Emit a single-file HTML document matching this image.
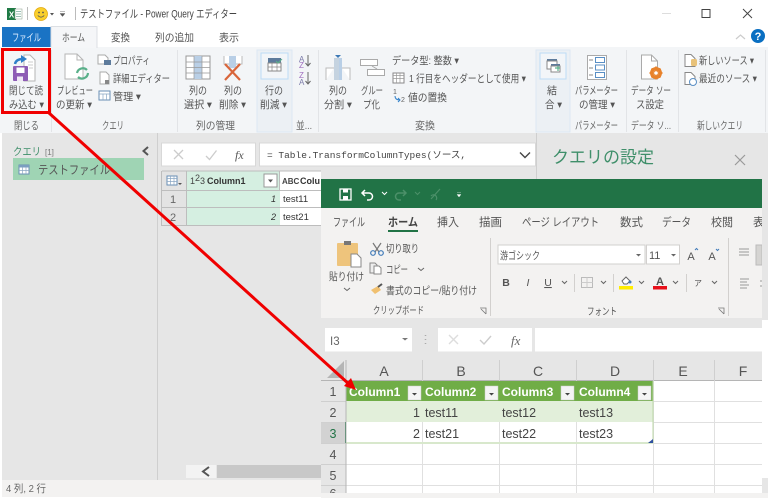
<!DOCTYPE html>
<html lang="ja">
<head>
<meta charset="utf-8">
<title>Power Query</title>
<style>
html,body{margin:0;padding:0;width:768px;height:498px;overflow:hidden;background:#fff}
svg{display:block;position:absolute;left:0;top:0;filter:blur(.3px)}
text{font-family:"Liberation Sans","Noto Sans CJK JP",sans-serif;fill:#555;font-size:10.5px}
.m{text-anchor:middle}
.g{fill:#666}
.x{fill:#555;font-size:11.5px}
.mono{font-family:"Liberation Mono","Noto Sans CJK JP",monospace;fill:#444;font-size:9.5px}
.h{fill:#555;font-size:14px;text-anchor:middle}
.c{fill:#444;font-size:12.5px}
.w{fill:#fff;font-weight:bold;font-size:12px}
</style>
</head>
<body>
<svg width="768" height="498" viewBox="0 0 768 498" xmlns="http://www.w3.org/2000/svg">
<!-- base -->
<rect width="768" height="498" fill="#fff"/>
<rect x="0" y="47" width="768" height="86" fill="#f3f5f7"/>
<rect x="2" y="133" width="766" height="347" fill="#e6e6e6"/>
<rect x="2" y="480" width="320" height="17" fill="#f3f2f1"/>
<rect x="157" y="133" width="1" height="347" fill="#cfcfcf"/>
<rect x="536" y="133" width="1" height="46" fill="#cfcfcf"/>

<!-- title bar -->
<rect x="7" y="8" width="9" height="12" fill="#1f7a45"/>
<rect x="15" y="9" width="7" height="10" fill="#fff" stroke="#9a9" stroke-width=".6"/>
<path d="M16 11.5h5M16 14h5M16 16.500h5" stroke="#7a9" stroke-width=".8"/>
<text x="11.500" y="17.500" class="m" style="fill:#fff;font-size:8px;font-weight:bold">X</text>
<rect x="27" y="7" width="1" height="13" fill="#bbb"/>
<circle cx="41" cy="14" r="6.500" fill="#f9cf2d" stroke="#e3a90f" stroke-width=".8"/>
<circle cx="39" cy="12.500" r=".9" fill="#555"/><circle cx="43" cy="12.500" r=".9" fill="#555"/>
<path d="M37.800 15.500q3.200 3.400 6.400 0" fill="none" stroke="#555" stroke-width=".9"/>
<path d="M50 13h4l-2 2.500z" fill="#555"/>
<path d="M60 11.500h5M60 13.500h5l-2.500 3z" fill="#555" stroke="#555" stroke-width=".4"/>
<rect x="75" y="7" width="1" height="13" fill="#bbb"/>
<text x="80" y="17.500" textLength="157" lengthAdjust="spacingAndGlyphs" style="font-size:11px;fill:#444">テストファイル - Power Query エディター</text>
<rect x="662" y="13" width="9" height="1" fill="#ddd"/>
<rect x="702" y="9.500" width="8" height="8" fill="none" stroke="#444" stroke-width="1"/>
<path d="M743 9l9 9M752 9l-9 9" stroke="#444" stroke-width="1" fill="none"/>

<!-- tabs -->
<rect x="2" y="27" width="49" height="20" fill="#1a73c4"/>
<text x="12" y="41" textLength="29" lengthAdjust="spacingAndGlyphs" style="fill:#dfeeff">ファイル</text>
<path d="M51 47V26.500H97V48" fill="#f5f6f8" stroke="#dcdfe3" stroke-width="1"/>
<text x="62" y="41" textLength="23" lengthAdjust="spacingAndGlyphs">ホーム</text>
<text x="111" y="41" textLength="19" lengthAdjust="spacingAndGlyphs">変換</text>
<text x="155" y="41" textLength="39" lengthAdjust="spacingAndGlyphs">列の追加</text>
<text x="219" y="41" textLength="20" lengthAdjust="spacingAndGlyphs">表示</text>
<path d="M736 39l4.500-4 4.500 4" fill="none" stroke="#ccc" stroke-width="1.200"/>
<circle cx="758" cy="36" r="7" fill="#0a6fc2"/>
<text x="758" y="40" class="m" style="fill:#fff;font-size:11px;font-weight:bold">?</text>

<!-- ribbon highlights & seps -->
<rect x="257" y="50" width="35" height="82" fill="#ecf0f4" stroke="#dce8f3"/>
<rect x="536" y="50" width="34" height="82" fill="#ecf0f4" stroke="#dce8f3"/>
<rect x="261" y="53" width="27" height="26" fill="#f2f5f8" stroke="#bcdcf6"/>
<rect x="540" y="53" width="26" height="26" fill="#f2f5f8" stroke="#bcdcf6"/>
<path d="M51.500 50v82M177.500 50v82M318.500 50v82M626.500 50v82M678.500 50v82M765.500 50v82" stroke="#e2e4e7"/>

<!-- close & load icon -->
<path d="M24 55h6l5 5v21H24z" fill="#fff" stroke="#b5b5b5"/>
<path d="M28 62h5M28 65h5M29 68h4" stroke="#ccc"/>
<rect x="13" y="66" width="15" height="15" fill="#8e5cb5" rx="1"/>
<rect x="16.500" y="67.500" width="8" height="5.500" fill="#fff"/>
<rect x="17" y="76.500" width="6" height="4.500" fill="#efe8f5"/>
<path d="M15 64q1-5 8-5" fill="none" stroke="#2f7fc9" stroke-width="2.400"/>
<path d="M21 55l6 4-6 4z" fill="#2f7fc9"/>
<text x="9" y="94" textLength="34" lengthAdjust="spacingAndGlyphs">閉じて読</text>
<text x="9" y="108" textLength="35" lengthAdjust="spacingAndGlyphs">み込む ▾</text>
<text x="14" y="129" textLength="25" lengthAdjust="spacingAndGlyphs" class="g">閉じる</text>

<!-- preview -->
<path d="M65 54h12l6 6v19H65z" fill="#fff" stroke="#b5b5b5"/>
<path d="M77 54v6h6" fill="none" stroke="#b5b5b5"/>
<path d="M77 73a6 6 0 0 1 10-3M88 73a6 6 0 0 1-10 4" fill="none" stroke="#5ab08a" stroke-width="2.200"/>
<text x="57" y="94" textLength="36" lengthAdjust="spacingAndGlyphs">プレビュー</text>
<text x="56" y="108" textLength="36" lengthAdjust="spacingAndGlyphs">の更新 ▾</text>
<path d="M98 55h7l3 3v6H98z" fill="#fff" stroke="#aaa"/><rect x="104" y="60" width="7" height="5" fill="#5d7b9c"/>
<path d="M100 72h6l3 3v9h-9z" fill="#fff" stroke="#aaa"/><rect x="105" y="80" width="4" height="4" fill="#888"/>
<rect x="99" y="91" width="11" height="9" fill="#fff" stroke="#6a8fb5"/><path d="M99 94h11M103 94v6M106.500 94v6" stroke="#8aa7c4" stroke-width=".7"/>
<text x="113" y="64" textLength="37" lengthAdjust="spacingAndGlyphs">プロパティ</text>
<text x="113" y="82" textLength="57" lengthAdjust="spacingAndGlyphs">詳細エディター</text>
<text x="113" y="100" textLength="28" lengthAdjust="spacingAndGlyphs">管理 ▾</text>
<text x="102" y="129" textLength="22" lengthAdjust="spacingAndGlyphs" class="g">クエリ</text>

<!-- column select/remove -->
<rect x="186" y="56" width="24" height="23" fill="#fff" stroke="#999"/>
<rect x="194" y="56" width="8" height="23" fill="#b9cfe6"/>
<path d="M186 62h24M186 67.500h24M186 73h24M194 56v23M202 56v23" stroke="#999" stroke-width=".7"/>
<text x="189" y="94" textLength="18" lengthAdjust="spacingAndGlyphs">列の</text>
<text x="184" y="108" textLength="28" lengthAdjust="spacingAndGlyphs">選択 ▾</text>
<path d="M224 56v8h18v-8" fill="#fff" stroke="#bbb"/>
<rect x="229" y="56" width="7" height="12" fill="#b9cfe6"/>
<path d="M225 64l15 16M240 64l-15 16" stroke="#d9663b" stroke-width="2.200"/>
<text x="224" y="94" textLength="18" lengthAdjust="spacingAndGlyphs">列の</text>
<text x="219" y="108" textLength="27" lengthAdjust="spacingAndGlyphs">削除 ▾</text>
<text x="196" y="129" textLength="39" lengthAdjust="spacingAndGlyphs" class="g">列の管理</text>

<!-- row reduce -->
<rect x="268" y="58" width="13" height="5" fill="#5d7b9c"/>
<rect x="268" y="63" width="13" height="8" fill="#fff" stroke="#888"/>
<path d="M272 63v8M277 63v8M268 67h13" stroke="#888" stroke-width=".7"/>
<path d="M276 61l2 2 4-4" stroke="#5ab08a" fill="none"/>
<text x="265" y="94" textLength="18" lengthAdjust="spacingAndGlyphs">行の</text>
<text x="260" y="108" textLength="27" lengthAdjust="spacingAndGlyphs">削減 ▾</text>

<!-- sort -->
<text x="299" y="62" style="font-size:8px;fill:#7a7aa8">A</text>
<text x="299" y="68" style="font-size:8px;fill:#a06fc0">Z</text>
<path d="M308 55v11M305.500 63l2.500 3 2.500-3" fill="none" stroke="#666"/>
<text x="299" y="78" style="font-size:8px;fill:#a06fc0">Z</text>
<text x="299" y="85" style="font-size:8px;fill:#7a7aa8">A</text>
<path d="M308 72v12M305.500 81l2.500 3 2.500-3" fill="none" stroke="#666"/>
<text x="296" y="129" textLength="16" lengthAdjust="spacingAndGlyphs" class="g">並...</text>

<!-- split, group -->
<path d="M326 80V68h8M342 68h8v12" fill="#fff" stroke="#bbb"/>
<rect x="334" y="58" width="5" height="22" fill="#c5d3e0"/>
<rect x="339" y="58" width="3" height="22" fill="#b9cfe6"/>
<path d="M335 55h6l-3 3z" fill="#3b78b5"/>
<text x="329" y="94" textLength="18" lengthAdjust="spacingAndGlyphs">列の</text>
<text x="324" y="108" textLength="28" lengthAdjust="spacingAndGlyphs">分割 ▾</text>
<rect x="360.500" y="59.500" width="17" height="6" fill="#fff" stroke="#aaa"/>
<rect x="367.500" y="69.500" width="17" height="6" fill="#fff" stroke="#aaa"/>
<path d="M372 66l5 3" stroke="#aaa"/>
<text x="361" y="94" textLength="22" lengthAdjust="spacingAndGlyphs">グルー</text>
<text x="363" y="108" textLength="17" lengthAdjust="spacingAndGlyphs">プ化</text>
<text x="392" y="64" textLength="67" lengthAdjust="spacingAndGlyphs">データ型: 整数 ▾</text>
<rect x="393" y="73" width="11" height="10" fill="#fff" stroke="#888"/>
<path d="M393 75.500h11M393 78.500h11M396.500 73v10M400 73v10" stroke="#999" stroke-width=".7"/>
<text x="409" y="82" textLength="117" lengthAdjust="spacingAndGlyphs">1 行目をヘッダーとして使用 ▾</text>
<text x="393" y="94" style="font-size:7px;fill:#666">1</text>
<path d="M395 96q0 4 5 4M398 98l2 2-2 2" fill="none" stroke="#2f7fc9"/>
<text x="401" y="102" style="font-size:7px;fill:#666">2</text>
<text x="408" y="101" textLength="39" lengthAdjust="spacingAndGlyphs">値の置換</text>
<text x="415" y="129" textLength="20" lengthAdjust="spacingAndGlyphs" class="g">変換</text>

<!-- merge -->
<rect x="547" y="59" width="10" height="3" fill="#5d7b9c"/>
<rect x="547" y="61" width="10" height="8" fill="#fff" stroke="#888"/>
<rect x="551" y="64" width="9" height="3" fill="#5d7b9c"/>
<rect x="551" y="66" width="9" height="6" fill="#fff" stroke="#888"/>
<path d="M555 68h5M558 66v5" stroke="#5ab08a" stroke-width="1.200"/>
<text x="547" y="94" textLength="10" lengthAdjust="spacingAndGlyphs">結</text>
<text x="545" y="108" textLength="17" lengthAdjust="spacingAndGlyphs">合 ▾</text>

<!-- params -->
<rect x="587.500" y="55.500" width="19" height="24" fill="#fff" stroke="#aaa"/>
<path d="M589 60h4M589 68h4M589 75h4" stroke="#888"/>
<rect x="595.500" y="57.500" width="9" height="5" fill="#fff" stroke="#5a8fc5"/>
<rect x="595.500" y="65" width="9" height="5" fill="#fff" stroke="#5a8fc5"/>
<rect x="595.500" y="72.500" width="9" height="5" fill="#fff" stroke="#5a8fc5"/>
<text x="575" y="94" textLength="43" lengthAdjust="spacingAndGlyphs">パラメーター</text>
<text x="579" y="108" textLength="36" lengthAdjust="spacingAndGlyphs">の管理 ▾</text>
<text x="575" y="129" textLength="43" lengthAdjust="spacingAndGlyphs" class="g">パラメーター</text>

<!-- data source -->
<path d="M641.500 55h10l6 6v18h-16z" fill="#fff" stroke="#aaa"/>
<path d="M651.500 55v6h6" fill="none" stroke="#aaa"/>
<circle cx="656" cy="73" r="4.500" fill="none" stroke="#e8822b" stroke-width="3"/>
<path d="M656 66.500v13M649.500 73h13M651.500 68.500l9 9M660.500 68.500l-9 9" stroke="#e8822b" stroke-width="1.800"/>
<circle cx="656" cy="73" r="1.800" fill="#fff"/>
<text x="631" y="94" textLength="40" lengthAdjust="spacingAndGlyphs">データ ソー</text>
<text x="636" y="108" textLength="28" lengthAdjust="spacingAndGlyphs">ス設定</text>
<text x="631" y="129" textLength="40" lengthAdjust="spacingAndGlyphs" class="g">データ ソ...</text>

<!-- new source -->
<path d="M685 54.500h6l4 4v8h-10z" fill="#fff" stroke="#888"/>
<rect x="691" y="59" width="6" height="7" rx="1.500" fill="#e8c27a"/>
<path d="M685 72.500h6l4 4v8h-10z" fill="#fff" stroke="#888"/>
<circle cx="693" cy="82" r="3.500" fill="#fff" stroke="#5a8fc5"/>
<text x="699" y="64" textLength="55" lengthAdjust="spacingAndGlyphs">新しいソース ▾</text>
<text x="699" y="82" textLength="58" lengthAdjust="spacingAndGlyphs">最近のソース ▾</text>
<text x="697" y="129" textLength="46" lengthAdjust="spacingAndGlyphs" class="g">新しいクエリ</text>

<!-- query pane -->
<text x="13" y="155" style="fill:#3f8f6a" textLength="28" lengthAdjust="spacingAndGlyphs">クエリ</text>
<text x="45" y="155" style="font-size:8px;fill:#777">[1]</text>
<path d="M148 147l-4.500 4 4.500 4" fill="none" stroke="#555" stroke-width="2"/>
<rect x="13" y="158" width="131" height="22" fill="#9fd4b4"/>
<rect x="19" y="165" width="10" height="9" fill="#fff" stroke="#6a8fb5"/>
<rect x="19" y="165" width="10" height="2.500" fill="#7b9ec0"/>
<path d="M22.500 167v7M26 167v7M19 170.500h10" stroke="#8aa7c4" stroke-width=".7"/>
<text x="38" y="174" textLength="72" lengthAdjust="spacingAndGlyphs" style="font-size:12px">テストファイル</text>

<!-- formula bar -->
<rect x="161.500" y="143" width="94" height="23" fill="#fff" stroke="#d8d8d8"/>
<path d="M174 150l9 9M183 150l-9 9" stroke="#ccc" stroke-width="1.300" fill="none"/>
<path d="M206 156l3.500 3.500 7-9" stroke="#ccc" stroke-width="1.300" fill="none"/>
<text x="235" y="159" style="font-family:'Liberation Serif',serif;font-style:italic;font-size:12px;fill:#555">fx</text>
<rect x="259.500" y="143" width="276" height="23" fill="#fff" stroke="#d8d8d8"/>
<text x="267" y="158" class="mono">= Table.TransformColumnTypes(ソース,</text>
<path d="M520 152.500l5 5 5-5" fill="none" stroke="#444" stroke-width="1.400"/>
<text x="552" y="163" textLength="102" lengthAdjust="spacingAndGlyphs" style="fill:#3f8f6a;font-size:17px">クエリの設定</text>
<path d="M735 155l10 10M745 155l-10 10" stroke="#999" stroke-width="1.200"/>

<!-- PQ table -->
<rect x="162" y="171" width="159" height="55" fill="#fff"/>
<rect x="162" y="171" width="25" height="55" fill="#e3e3e3"/>
<rect x="187" y="171" width="93" height="55" fill="#d5efe1"/>
<path d="M161.500 171v55M162 171h159M162 190.500h159M162 207.500h159M162 225.500h159M186.500 171v55M279.500 171v19" stroke="#bdbdbd" fill="none"/>
<rect x="167" y="176" width="10" height="9" fill="#fff" stroke="#6a8fb5"/>
<path d="M167 178.500h10M170.500 176v9M174 176v9M167 181.500h10" stroke="#8aa7c4" stroke-width=".7"/>
<path d="M178 183h4l-2 2z" fill="#555"/>
<text x="190" y="184" style="font-size:9px;fill:#444">1<tspan dy="-3">2</tspan><tspan dy="3">3</tspan></text>
<text x="207" y="184" style="font-size:9px;font-weight:bold;fill:#333">Column1</text>
<rect x="264" y="174" width="13" height="13" fill="#fff" stroke="#999"/>
<path d="M268 179.500h5l-2.500 3z" fill="#555"/>
<text x="282" y="184" style="font-size:8px;fill:#444;font-weight:bold">ABC</text>
<text x="300" y="184" style="font-size:9px;font-weight:bold;fill:#333">Colu</text>
<text x="173" y="203" class="m" style="font-size:11px;fill:#666">1</text>
<text x="173" y="221" class="m" style="font-size:11px;fill:#666">2</text>
<text x="276" y="202" style="text-anchor:end;font-size:9px;font-style:italic;fill:#333">1</text>
<text x="276" y="220" style="text-anchor:end;font-size:9px;font-style:italic;fill:#333">2</text>
<text x="283" y="202" style="font-size:9.500px;fill:#333">test11</text>
<text x="283" y="220" style="font-size:9.500px;fill:#333">test21</text>

<!-- pq bottom -->
<rect x="186" y="465" width="30" height="13" fill="#f3f3f3"/>
<path d="M209 467l-6 4.500 6 4.500" fill="none" stroke="#555" stroke-width="2"/>
<rect x="217" y="465" width="104" height="13" fill="#c8c8c8"/>
<text x="6" y="492" textLength="40" lengthAdjust="spacingAndGlyphs" style="fill:#666">4 列, 2 行</text>

<!-- Excel window -->
<rect x="321" y="179" width="441" height="314" fill="#e6e6e6"/>
<rect x="321" y="179" width="441" height="29" fill="#217346"/>
<rect x="321" y="208" width="441" height="110" fill="#f3f2f1"/>

<!-- QAT -->
<rect x="340" y="189" width="11" height="11" fill="none" stroke="#fff" stroke-width="1.300"/>
<rect x="343" y="189" width="5" height="3.500" fill="#fff"/><rect x="343" y="196" width="5" height="4" fill="#fff"/>
<path d="M365 190l-3 3 3 3M362 193h7a3.500 3.500 0 0 1 0 7h-2" fill="none" stroke="#fff" stroke-width="1.500"/>
<path d="M382 192l2.500 2.500 2.500-2.500" fill="none" stroke="#fff"/>
<path d="M403 190l3 3-3 3M406 193h-7a3.500 3.500 0 0 0 0 7h2" fill="none" stroke="#4c9069" stroke-width="1.500"/>
<path d="M415 192l2.500 2.500 2.500-2.500" fill="none" stroke="#4c9069"/>
<path d="M431 199l9-10M431 196a3 3 0 1 1 5 4" fill="none" stroke="#4c9069" stroke-width="1.200"/>
<path d="M457 192.500h4M457 194.500h4l-2 2.500z" fill="#fff" stroke="#fff" stroke-width=".3"/>

<!-- Excel tabs -->
<text x="333" y="226" textLength="32" lengthAdjust="spacingAndGlyphs" class="x">ファイル</text>
<text x="388" y="226" textLength="30" lengthAdjust="spacingAndGlyphs" style="font-size:11.500px;font-weight:bold;fill:#444">ホーム</text>
<rect x="388" y="230" width="30" height="2" fill="#217346"/>
<text x="437" y="226" textLength="22" lengthAdjust="spacingAndGlyphs" class="x">挿入</text>
<text x="479" y="226" textLength="23" lengthAdjust="spacingAndGlyphs" class="x">描画</text>
<text x="522" y="226" textLength="77" lengthAdjust="spacingAndGlyphs" class="x">ページ レイアウト</text>
<text x="620" y="226" textLength="23" lengthAdjust="spacingAndGlyphs" class="x">数式</text>
<text x="662" y="226" textLength="29" lengthAdjust="spacingAndGlyphs" class="x">データ</text>
<text x="711" y="226" textLength="22" lengthAdjust="spacingAndGlyphs" class="x">校閲</text>
<text x="753" y="226" class="x">表</text>

<!-- clipboard -->
<rect x="337" y="243" width="21" height="23" fill="#eec47c" rx="1"/>
<rect x="344" y="241" width="7" height="4" fill="#777"/>
<path d="M351 254h6l4 4v9h-10z" fill="#fff" stroke="#888"/>
<text x="329" y="280" textLength="35" lengthAdjust="spacingAndGlyphs">貼り付け</text>
<path d="M344 288l3 2.500 3-2.500" fill="none" stroke="#666"/>
<path d="M373 243l6 9M381 243l-6 9" stroke="#777" stroke-width="1.200"/>
<circle cx="373" cy="253" r="2.300" fill="none" stroke="#3f7ab8" stroke-width="1.200"/><circle cx="381" cy="253" r="2.300" fill="none" stroke="#3f7ab8" stroke-width="1.200"/>
<path d="M370 263h5l2 2v8h-7z" fill="#eee" stroke="#888"/><path d="M374 266h5l2 2v6h-7z" fill="#fff" stroke="#888"/>
<path d="M371 290l7-4 3 4-6 4z" fill="#f0c070"/><path d="M378 287l4-3" stroke="#555" stroke-width="2"/>
<text x="386" y="252" textLength="33" lengthAdjust="spacingAndGlyphs">切り取り</text>
<text x="386" y="273" textLength="22" lengthAdjust="spacingAndGlyphs">コピー</text>
<path d="M418 268l3 2.500 3-2.500" fill="none" stroke="#666"/>
<text x="386" y="294" textLength="91" lengthAdjust="spacingAndGlyphs">書式のコピー/貼り付け</text>
<text x="373" y="314" textLength="51" lengthAdjust="spacingAndGlyphs" style="font-size:10px">クリップボード</text>
<path d="M480 308h6v6M481 309l5 5" fill="none" stroke="#777" stroke-width=".8"/>
<rect x="490" y="238" width="1" height="78" fill="#d2d0ce"/>

<!-- font -->
<rect x="498" y="245" width="147" height="19" fill="#fff" stroke="#d2d0ce"/>
<text x="500" y="259" textLength="40" lengthAdjust="spacingAndGlyphs">游ゴシック</text>
<path d="M636 254h5l-2.500 2.500z" fill="#666"/>
<rect x="646.500" y="245" width="33" height="19" fill="#fff" stroke="#d2d0ce"/>
<text x="649" y="259" style="font-size:11px">11</text>
<path d="M671 254h5l-2.500 2.500z" fill="#666"/>
<text x="691" y="260" class="m" style="font-size:11px">A</text><path d="M695 250l1.500-1.500 1.500 1.500" fill="none" stroke="#3f7ab8"/>
<text x="712" y="260" class="m" style="font-size:11px">A</text><path d="M716 249l1.500 1.500 1.500-1.500" fill="none" stroke="#3f7ab8"/>
<text x="506" y="286" class="m" style="font-weight:bold">B</text>
<text x="528" y="286" class="m" style="font-style:italic">I</text>
<text x="548" y="286" class="m" style="text-decoration:underline">U</text>
<path d="M562 281l2.500 2.500 2.500-2.500M601 281l2.500 2.500 2.500-2.500M639 281l2.500 2.500 2.500-2.500M673 281l2.500 2.500 2.500-2.500M712 281l2.500 2.500 2.500-2.500" fill="none" stroke="#666"/>
<path d="M574.500 274v18M613.500 274v18M686.500 274v18" stroke="#d2d0ce"/>
<rect x="581.500" y="277.500" width="11" height="10" fill="none" stroke="#bbb"/><path d="M587 277.500v10M581.500 282.500h11" stroke="#ccc"/>
<path d="M622 281l4-4 4 4-3 3h-3z" fill="#fff" stroke="#666"/><circle cx="630" cy="282" r="1.500" fill="#3f7ab8"/>
<rect x="619" y="286" width="14" height="3.500" fill="#ffec00"/>
<text x="660" y="285" class="m" style="font-size:11px;font-weight:bold">A</text>
<rect x="653" y="286" width="14" height="3.500" fill="#e8101a"/>
<text x="698" y="286" class="m" style="font-size:8px">ア</text>
<text x="587" y="315" textLength="30" lengthAdjust="spacingAndGlyphs" style="font-size:10px">フォント</text>
<path d="M718 308h6v6M719 309l5 5" fill="none" stroke="#777" stroke-width=".8"/>
<rect x="728" y="238" width="1" height="78" fill="#d2d0ce"/>
<path d="M739 249h10M739 252h10M739 255h10" stroke="#999"/>
<rect x="756" y="245" width="6" height="20" fill="#d5d4d2" stroke="#bbb"/>
<path d="M740 279h9M740 282h7M740 285h9M740 288h7M760 281h2M760 286h2" stroke="#999"/>

<!-- Excel formula -->
<rect x="325" y="328" width="87" height="23.500" fill="#fff"/>
<text x="330" y="345" style="font-size:11.500px;fill:#666">I3</text>
<path d="M402 338h6l-3 2.500z" fill="#777"/>
<path d="M425.500 335v1M425.500 339v1M425.500 343v1" stroke="#aaa" stroke-width="1.500"/>
<rect x="438" y="328" width="94" height="23.500" fill="#fff"/>
<path d="M449 335l9 9M458 335l-9 9" stroke="#ddd" stroke-width="1.400"/>
<path d="M480 340l4 4 7-8" fill="none" stroke="#ccc" stroke-width="1.400"/>
<text x="511" y="345" style="font-family:'Liberation Serif',serif;font-style:italic;font-size:13px;fill:#666">fx</text>
<rect x="535" y="328" width="227" height="23.500" fill="#fff"/>

<!-- Excel grid -->
<rect x="346" y="381" width="416" height="112" fill="#fff"/>
<rect x="346" y="381" width="307" height="20" fill="#70ad47"/>
<rect x="346" y="401" width="307" height="21" fill="#e2efda"/>
<path d="M321 380.500h441" stroke="#b5b5b5"/>
<path d="M422.500 360v21M499.500 360v21M576.500 360v21M653.500 360v21M714.500 360v21" stroke="#cfcfcf"/>
<path d="M422.500 422v71M499.500 422v71M576.500 422v71M653.500 381v112M714.500 381v112" stroke="#e0e0e0"/>
<path d="M346 443.500h416M346 464.500h416M346 485.500h416M653 401.500h109M653 422.500h109" stroke="#e0e0e0"/>
<path d="M346 443h307" stroke="#d8e8cc" stroke-width="2"/>
<path d="M653 381v62" stroke="#bcd9a7"/>
<path d="M321 401.500h25M321 422.500h25M321 443.500h25M321 464.500h25M321 485.500h25" stroke="#cfcfcf"/>
<rect x="321" y="422.500" width="25" height="20.500" fill="#d2d2d2"/>
<rect x="345" y="422" width="1.500" height="21" fill="#217346"/>
<rect x="345.500" y="360" width="1" height="133" fill="#b5b5b5"/>
<path d="M344 361v17h-17z" fill="#b5b5b5"/>
<text x="384" y="376" class="h">A</text>
<text x="461" y="376" class="h">B</text>
<text x="538" y="376" class="h">C</text>
<text x="615" y="376" class="h">D</text>
<text x="683" y="376" class="h">E</text>
<text x="743" y="376" class="h">F</text>
<text x="333" y="396" class="m" style="font-size:12.500px">1</text>
<text x="333" y="417" class="m" style="font-size:12.500px">2</text>
<text x="333" y="438" class="m" style="font-size:12.500px;fill:#217346">3</text>
<text x="333" y="459" class="m" style="font-size:12.500px">4</text>
<text x="333" y="480" class="m" style="font-size:12.500px">5</text>
<text x="333" y="498" class="m" style="font-size:12.500px">6</text>
<text x="349" y="396" class="w">Column1</text>
<text x="425" y="396" class="w">Column2</text>
<text x="502" y="396" class="w">Column3</text>
<text x="579" y="396" class="w">Column4</text>
<g fill="#f4f4f4" stroke="#ccc" stroke-width=".5">
<rect x="408" y="386" width="13" height="14"/><rect x="485" y="386" width="13" height="14"/><rect x="561" y="386" width="13" height="14"/><rect x="638" y="386" width="13" height="14"/>
</g>
<path d="M412 393h5l-2.500 2.500zM489 393h5l-2.500 2.500zM565 393h5l-2.500 2.500zM642 393h5l-2.500 2.500z" fill="#444"/>
<text x="420" y="417" style="text-anchor:end" class="c">1</text>
<text x="420" y="438" style="text-anchor:end" class="c">2</text>
<text x="425" y="417" class="c">test11</text>
<text x="425" y="438" class="c">test21</text>
<text x="502" y="417" class="c">test12</text>
<text x="502" y="438" class="c">test22</text>
<text x="579" y="417" class="c">test13</text>
<text x="579" y="438" class="c">test23</text>
<path d="M653 439v4h-5z" fill="#2f4f9f"/>
<rect x="321" y="493" width="447" height="5" fill="#f3f2f1"/>
<rect x="762" y="320" width="6" height="158" fill="#fff"/>
<rect x="762" y="478" width="6" height="15" fill="#e6e6e6"/>
<rect x="762" y="179" width="6" height="141" fill="#e6e6e6"/>

<!-- red annotations -->
<rect x="2.500" y="49.500" width="47" height="63" fill="none" stroke="#f00000" stroke-width="3"/>
<path d="M49 113L350 385" stroke="#f00000" stroke-width="3" fill="none"/>
<path d="M356 390L344 386L351 378z" fill="#f00000"/>
</svg>
</body>
</html>
